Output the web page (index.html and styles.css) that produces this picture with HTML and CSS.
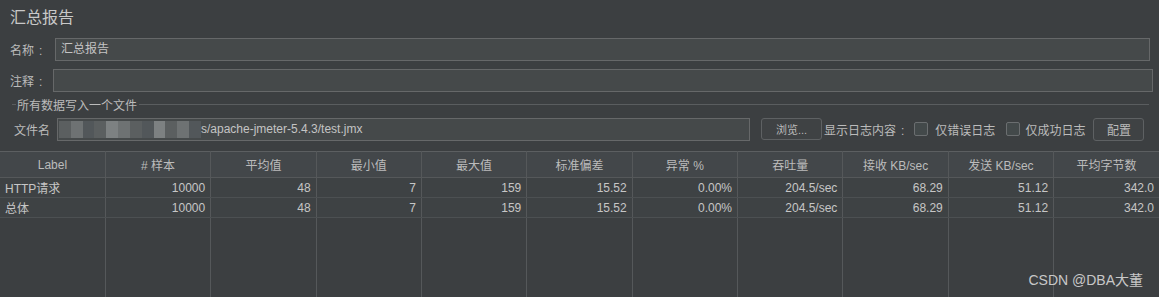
FILE: index.html
```html
<!DOCTYPE html>
<html lang="zh">
<head>
	<meta charset="UTF-8">
	<title>汇总报告</title>
	<link rel="stylesheet" href="styles.css">
</head>
<body>
	<div class='panel'>
		<h1 class='title'>汇总报告</h1>
		<div class='row row-name'>
			<span class='label'>名称<em>:</em></span>
			<div class='field'>汇总报告</div>
		</div>
		<div class='row row-note'>
			<span class='label'>注释<em>:</em></span>
			<div class='field'></div>
		</div>
		<div class='group'>
			<div class='legend'><span>所有数据写入一个文件</span></div>
			<div class='row row-file'>
				<span class='label'>文件名</span>
				<div class='field file'>
					<span class='mosaic'>
						<i class='m1'></i><i class='m2'></i><i class='m3'></i><i class='m1'></i><i class='m4'></i><i class='m2'></i><i class='m1'></i><i class='m3'></i><i class='m4'></i><i class='m1'></i><i class='m2'></i><i class='m3'></i>
					</span>s/apache-jmeter-5.4.3/test.jmx
				</div>
				<button class='btn browse'>浏览...</button>
				<span class='log'>显示日志内容<em>:</em></span>
				<label class='check'><span class='box'></span>仅错误日志</label>
				<label class='check'><span class='box'></span>仅成功日志</label>
				<button class='btn config'>配置</button>
			</div>
		</div>
	</div>
	<table class='report'>
		<thead>
			<tr>
				<th>Label</th><th># 样本</th><th>平均值</th><th>最小值</th><th>最大值</th><th>标准偏差</th><th>异常 %</th><th>吞吐量</th><th>接收 KB/sec</th><th>发送 KB/sec</th><th>平均字节数</th>
			</tr>
		</thead>
		<tbody>
			<tr>
				<td class='name'>HTTP请求</td><td>10000</td><td>48</td><td>7</td><td>159</td><td>15.52</td><td>0.00%</td><td>204.5/sec</td><td>68.29</td><td>51.12</td><td>342.0</td>
			</tr>
			<tr>
				<td class='name'>总体</td><td>10000</td><td>48</td><td>7</td><td>159</td><td>15.52</td><td>0.00%</td><td>204.5/sec</td><td>68.29</td><td>51.12</td><td>342.0</td>
			</tr>
			<tr class='filler'>
				<td></td><td></td><td></td><td></td><td></td><td></td><td></td><td></td><td></td><td></td><td></td>
			</tr>
		</tbody>
	</table>
	<div class='mark'>CSDN @DBA大董</div>
</body>
</html>
```

FILE: styles.css
```css
*{
	padding: 0;
	margin: 0;
	box-sizing: border-box;
}
html,body{
	width: 1159px;
	height: 297px;
	overflow: hidden;
}
body{
	position: relative;
	background: #3c3f41;
	color: #bbbbbb;
	font-family: "Liberation Sans", "Noto Sans CJK SC", sans-serif;
	font-size: 12px;
}
em{
	font-style: normal;
	margin-left: 5px;
}
.panel{
	padding: 0 8px 0 10px;
	height: 151px;
}
.title{
	font-weight: normal;
	font-size: 16px;
	line-height: 22px;
	padding-top: 7px;
	height: 37px;
	color: #c8c8c8;
}
.row{
	display: flex;
	align-items: center;
}
.label{
	flex: none;
	font-size: 12px;
}
.field{
	flex: 1;
	height: 23px;
	line-height: 21px;
	background: #45494a;
	border: 1px solid #666869;
	padding: 0 5px;
	font-size: 12px;
	color: #c4c4c4;
	white-space: nowrap;
	overflow: hidden;
}
.row-name .label{
	width: 45px;
}
.row-name{
	height: 24px;
	margin-right: 1px;
}
.row-note{
	margin-top: 8px;
	height: 23px;
}
.row-note .label{
	width: 43px;
}
.row-note .field{
	margin-right: -2px;
}
.group{
	margin-top: 4px;
}
.legend{
	display: flex;
	align-items: center;
	height: 16px;
	padding-left: 2px;
	margin-right: 2px;
}
.legend:before{
	content: '';
	width: 4px;
	border-top: 1px solid #5a5d5f;
}
.legend:after{
	content: '';
	flex: 1;
	border-top: 1px solid #5a5d5f;
}
.legend span{
	padding: 0 2px 0 1px;
	font-size: 12px;
}
.row-file{
	margin-top: 5px;
	padding-left: 4px;
	height: 24px;
}
.row-file .label{
	width: 43px;
}
.row-file .field{
	flex: none;
	width: 693px;
	padding-left: 1px;
}
.mosaic{
	display: inline-flex;
	vertical-align: top;
	height: 24px;
	width: 142px;
}
.mosaic i{
	flex: 1;
	display: block;
	height: 17px;
	margin-top: 2px;
}
.mosaic .m1{ background: #5b5f60; }
.mosaic .m2{ background: #6e7273; }
.mosaic .m3{ background: #52575a; }
.mosaic .m4{ background: #7d8182; }
.btn{
	flex: none;
	background: #3f4244;
	border: 1px solid #5e6163;
	border-radius: 3px;
	color: #bbbbbb;
	font-family: inherit;
	font-size: 11px;
	height: 22px;
}
.browse{
	width: 61px;
	margin-left: 11px;
}
.log{
	margin-left: 2px;
	font-size: 12px;
}
.check{
	display: flex;
	align-items: center;
	margin-left: 10px;
	font-size: 12px;
}
.check .box{
	width: 14px;
	height: 14px;
	border: 1px solid #6b6e70;
	border-radius: 2px;
	background: #43494a;
	margin-right: 7px;
}
.check + .check{
	margin-left: 11px;
}
.check + .check .box{
	margin-right: 5px;
}
.config{
	width: 51px;
	height: 23px;
	margin-left: 8px;
	font-size: 12px;
}
.report{
	width: 1159px;
	table-layout: fixed;
	border-collapse: collapse;
	font-size: 12px;
}
.report th{
	height: 26px;
	font-weight: normal;
	background: #43474a;
	border: 1px solid #55585a;
	border-top-color: #5c5f61;
	text-align: center;
	color: #bcbcbc;
}
.report td{
	height: 20px;
	border-left: 1px solid #55585a;
	border-right: 1px solid #55585a;
	border-bottom: 1px solid #4c5052;
	text-align: right;
	padding: 0 5px;
	background: #3e4244;
	color: #c6c6c6;
}
.report td.name{
	text-align: left;
}
.report .filler td{
	height: 80px;
	background: #3c3f41;
	border-bottom: none;
}
.report th:first-child,.report td:first-child{
	border-left: none;
}
.report th:last-child,.report td:last-child{
	border-right: none;
}
.mark{
	position: absolute;
	right: 16px;
	bottom: 8px;
	font-size: 14px;
	color: #c8c8c8;
}
```
